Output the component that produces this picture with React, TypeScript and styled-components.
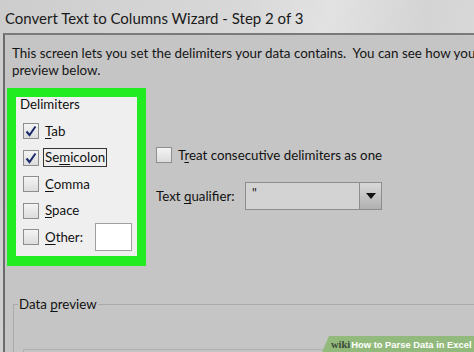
import styled, { createGlobalStyle } from "styled-components";

const GlobalStyle = createGlobalStyle`
  html, body {
    margin: 0;
    padding: 0;
    background: #cfcfcf;
  }
  * {
    box-sizing: border-box;
  }
`;

const font = `Lato, "Open Sans", "Liberation Sans", sans-serif`;

const Screen = styled.div`
  position: relative;
  width: 474px;
  height: 352px;
  overflow: hidden;
  font-family: ${font};
  color: #111;
  background: linear-gradient(100deg, #cdcdcd 0%, #d8d8d8 45%, #e2e2e2 62%, #d4d4d4 80%, #dcdcdc 100%);
  display: flex;
  flex-direction: column;
`;

const TitleBar = styled.div`
  flex: none;
  height: 33px;
  padding: 8px 0 0 5px;
  font-size: 15px;
  line-height: 20px;
  color: #1a1a1a;
  white-space: nowrap;
`;

const Panel = styled.div`
  flex: 1;
  margin-left: 3px;
  border-left: 2px solid #6b6b6b;
  border-top: 2px solid #7a7a7a;
  background: #c5c5c5;
  display: flex;
  flex-direction: column;
  min-width: 0;
`;

const Intro = styled.p`
  margin: 10px 0 0 7px;
  font-size: 13.4px;
  line-height: 17px;
  white-space: nowrap;
  color: #151515;
`;

const OptionsRow = styled.div`
  display: flex;
  margin-top: 9px;
  margin-left: 2px;
`;

const Highlight = styled.div`
  width: 139px;
  height: 178px;
  border: solid #21ec21;
  border-width: 9px 9px 10px 9px;
  background: #21ec21;
`;

const GroupBox = styled.div`
  height: 100%;
  background: #efefef;
  display: flex;
  flex-direction: column;
  padding: 0 4px 0 4px;
`;

const GroupTitle = styled.div`
  font-size: 13.3px;
  line-height: 14px;
`;

const CheckList = styled.div`
  display: flex;
  flex-direction: column;
  gap: 10.5px;
  margin-top: 12px;
  padding-left: 3px;
`;

const CheckRow = styled.div`
  display: flex;
  align-items: center;
  gap: 6px;
  height: 16px;
  font-size: 13.3px;
  white-space: nowrap;
`;

const Box = styled.span`
  flex: none;
  width: 16px;
  height: 16px;
  border: 1px solid #8e8e8e;
  background: linear-gradient(180deg, #f4f4f4 0%, #dcdcdc 100%);
  display: flex;
  align-items: center;
  justify-content: center;
`;

const Label = styled.span<{ focused?: boolean }>`
  line-height: 17px;
  padding: 0 1px;
  border: 1px solid ${(p) => (p.focused ? "#333" : "transparent")};
  margin-left: -2px;
  u {
    text-decoration-thickness: 1px;
    text-underline-offset: 2px;
  }
`;

const OtherInput = styled.span`
  width: 37px;
  height: 28px;
  margin-left: auto;
  margin-right: 1px;
  background: #fff;
  border: 1px solid #a0a0a0;
`;

const RightColumn = styled.div`
  display: flex;
  flex-direction: column;
  margin-left: 10px;
  padding-top: 59px;
  gap: 19px;
`;

const QualifierRow = styled.div`
  display: flex;
  align-items: center;
  font-size: 13.3px;
  white-space: nowrap;
  u {
    text-underline-offset: 2px;
  }
`;

const QualifierLabel = styled.span`
  width: 89px;
`;

const Select = styled.div`
  width: 137px;
  height: 28px;
  display: flex;
  border: 1px solid #8d8d8d;
  background: #d3d3d3;
`;

const SelectValue = styled.div`
  flex: 1;
  padding: 2px 0 0 6px;
  font-size: 13px;
  color: #222;
`;

const DropButton = styled.div`
  width: 22px;
  border-left: 1px solid #8d8d8d;
  background: linear-gradient(180deg, #d9d9d9 0%, #b0b0b0 100%);
  display: flex;
  align-items: center;
  justify-content: center;
`;

const Preview = styled.fieldset`
  margin: 29px -20px 0 8px;
  padding: 0 0 0 4px;
  height: 80px;
  border: none;
  border-top: 1px solid #a9a9a9;
  border-left: 1px solid #a9a9a9;
  legend {
    font-size: 13.3px;
    line-height: 18px;
    padding: 0 1px;
    u {
      text-underline-offset: 2px;
    }
  }
`;

const PreviewTable = styled.div`
  margin: 36px 0 0 5px;
  height: 40px;
  border-top: 1px solid #b0b0b0;
  border-left: 1px solid #b0b0b0;
`;

const Badge = styled.div`
  position: absolute;
  right: 0;
  bottom: 0;
  height: 16px;
  width: 152px;
  padding: 1px 0 0 9px;
  background: rgba(142, 184, 118, 0.92);
  clip-path: polygon(7px 0, 100% 0, 100% 100%, 0 100%);
  font-family: "Liberation Sans", Arial, sans-serif;
  font-weight: bold;
  font-size: 9.4px;
  line-height: 15px;
  color: #fff;
  white-space: nowrap;
  b {
    font-family: "Liberation Serif", serif;
    color: #3c4a36;
    font-size: 10.5px;
    margin-right: 1px;
  }
`;

function Check(props: { checked?: boolean }) {
  return (
    <Box>
      {props.checked && (
        <svg width="12" height="12" viewBox="0 0 12 12">
          <path d="M1.5 6.5 L4.5 10 L10.5 1.5" fill="none" stroke="#1b2a6b" strokeWidth="2" />
        </svg>
      )}
    </Box>
  );
}

const delimiters = [
  { key: "T", rest: "ab", checked: true },
  { pre: "Se", key: "m", rest: "icolon", checked: true, focused: true },
  { key: "C", rest: "omma" },
  { key: "S", rest: "pace" },
  { key: "O", rest: "ther:", other: true },
];

export default function App() {
  return (
    <Screen>
      <GlobalStyle />
      <TitleBar>Convert Text to Columns Wizard - Step 2 of 3</TitleBar>
      <Panel>
        <Intro>
          This screen lets you set the delimiters your data contains.&nbsp; You can see how your
          <br />
          preview below.
        </Intro>
        <OptionsRow>
          <Highlight>
            <GroupBox>
              <GroupTitle>Delimiters</GroupTitle>
              <CheckList>
                {delimiters.map((d) => (
                  <CheckRow key={d.key + d.rest}>
                    <Check checked={d.checked} />
                    <Label focused={d.focused}>
                      {d.pre}
                      <u>{d.key}</u>
                      {d.rest}
                    </Label>
                    {d.other && <OtherInput />}
                  </CheckRow>
                ))}
              </CheckList>
            </GroupBox>
          </Highlight>
          <RightColumn>
            <CheckRow>
              <Check />
              <Label>
                T<u>r</u>eat consecutive delimiters as one
              </Label>
            </CheckRow>
            <QualifierRow>
              <QualifierLabel>
                Text <u>q</u>ualifier:
              </QualifierLabel>
              <Select>
                <SelectValue>"</SelectValue>
                <DropButton>
                  <svg width="10" height="6" viewBox="0 0 10 6">
                    <path d="M0 0 H10 L5 6 Z" fill="#111" />
                  </svg>
                </DropButton>
              </Select>
            </QualifierRow>
          </RightColumn>
        </OptionsRow>
        <Preview>
          <legend>
            Data <u>p</u>review
          </legend>
          <PreviewTable />
        </Preview>
      </Panel>
      <Badge>
        <b>wiki</b>How to Parse Data in Excel
      </Badge>
    </Screen>
  );
}
